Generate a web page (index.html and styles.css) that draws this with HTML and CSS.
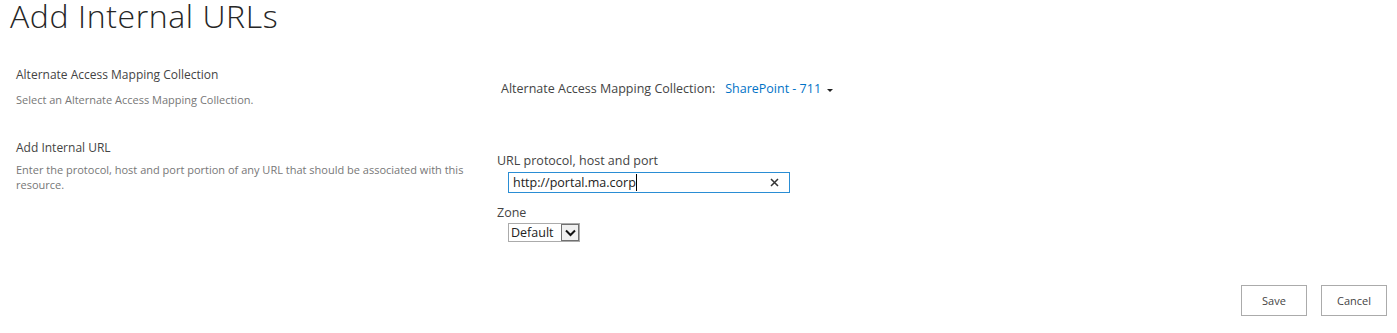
FILE: index.html
```html
<!DOCTYPE html>
<html>
<head>
<meta charset="utf-8">
<link rel="stylesheet" href="styles.css">
</head>
<body>
<div class="page">
  <h1 class="title">Add Internal URLs</h1>

  <div class="section s1">
    <div class="left">
      <div class="label">Alternate Access Mapping Collection</div>
      <div class="desc">Select an Alternate Access Mapping Collection.</div>
    </div>
    <div class="right r1">
      <span class="rlabel">Alternate Access Mapping Collection:</span>
      <span class="link">SharePoint - 711</span>
      <svg class="tri" width="6" height="4" viewBox="0 0 6 4"><path d="M0 0H6L3 3Z" fill="#222"/></svg>
    </div>
  </div>

  <div class="section s2">
    <div class="left">
      <div class="label">Add Internal URL</div>
      <div class="desc">Enter the protocol, host and port portion of any URL that should be associated with this resource.</div>
    </div>
    <div class="right r2">
      <div class="flabel">URL protocol, host and port</div>
      <div class="input">
        <span class="val">http://portal.ma.corp</span><span class="caret"></span>
        <svg class="clear" width="9" height="9" viewBox="0 0 9 9"><path d="M1 1L8 8M8 1L1 8" stroke="#333" stroke-width="1.5"/></svg>
      </div>
      <div class="flabel zone">Zone</div>
      <div class="select">
        <span class="opt">Default</span>
        <span class="dbtn"><svg width="11" height="8" viewBox="0 0 11 8"><path d="M1 1.5L5.5 6L10 1.5" stroke="#111" stroke-width="2" fill="none"/></svg></span>
      </div>
    </div>
  </div>

  <div class="buttons">
    <button class="btn">Save</button>
    <button class="btn">Cancel</button>
  </div>
</div>
</body>
</html>
```
FILE: styles.css
```css
html, body {
  margin: 0;
  padding: 0;
  background: #fff;
}
body {
  font-family: "Open Sans", "Noto Sans", sans-serif;
  color: #444;
}
.page {
  width: 1397px;
  height: 333px;
  padding: 0 10px;
  box-sizing: border-box;
}
.title {
  margin: 0;
  font-weight: 300;
  font-size: 32px;
  line-height: 32px;
  height: 32px;
  color: #262626;
  letter-spacing: 0.6px;
}
.section {
  display: flex;
  align-items: flex-start;
}
.left {
  width: 481px;
  flex: none;
  padding-left: 6px;
  box-sizing: border-box;
}
.label {
  font-size: 12px;
  line-height: 18px;
  color: #444;
}
.desc {
  font-size: 11px;
  line-height: 15px;
  color: #777;
  margin-top: 8px;
  width: 465px;
}
.s1 {
  margin-top: 34px;
  height: 72px;
}
.r1 {
  padding-top: 14px;
  padding-left: 10px;
  font-size: 12.5px;
  line-height: 18px;
  display: flex;
  align-items: center;
}
.rlabel {
  color: #444;
}
.link {
  color: #0072c6;
  margin-left: 10px;
}
.tri {
  margin-left: 6px;
  margin-top: 3px;
}
.s2 {
  height: 147px;
}
.s2 .label {
  margin-top: 1px;
}
.s2 .desc {
  margin-top: 5px;
}
.r2 {
  padding-top: 14px;
  padding-left: 6px;
}
.flabel {
  font-size: 12.5px;
  line-height: 18px;
  color: #444;
}
.zone {
  margin-top: 11px;
}
.input {
  margin-top: 2px;
  margin-left: 11px;
  width: 282px;
  height: 21px;
  box-sizing: border-box;
  border: 1px solid #2a8dd4;
  display: flex;
  align-items: center;
  padding-left: 4px;
  padding-right: 10px;
  font-size: 12.5px;
  color: #222;
}
.caret {
  width: 1px;
  height: 17px;
  background: #000;
  margin-left: 0;
}
.clear {
  margin-left: auto;
}
.select {
  margin-top: 1px;
  margin-left: 11px;
  width: 72px;
  height: 19px;
  box-sizing: border-box;
  border: 1px solid #ababab;
  display: flex;
  align-items: center;
  font-size: 12.5px;
  color: #222;
  padding-left: 2px;
}
.opt {
  flex: 1;
}
.dbtn {
  width: 18px;
  height: 17px;
  box-sizing: border-box;
  border: 1px solid #707070;
  background: #f0f0f0;
  display: flex;
  align-items: center;
  justify-content: center;
}
.buttons {
  display: flex;
  justify-content: flex-end;
  gap: 14px;
}
.btn {
  font-family: "Open Sans", "Noto Sans", sans-serif;
  font-size: 11px;
  color: #444;
  background: #fff;
  border: 1px solid #ababab;
  height: 31px;
  width: 66px;
  padding: 0;
  box-sizing: border-box;
}
```
